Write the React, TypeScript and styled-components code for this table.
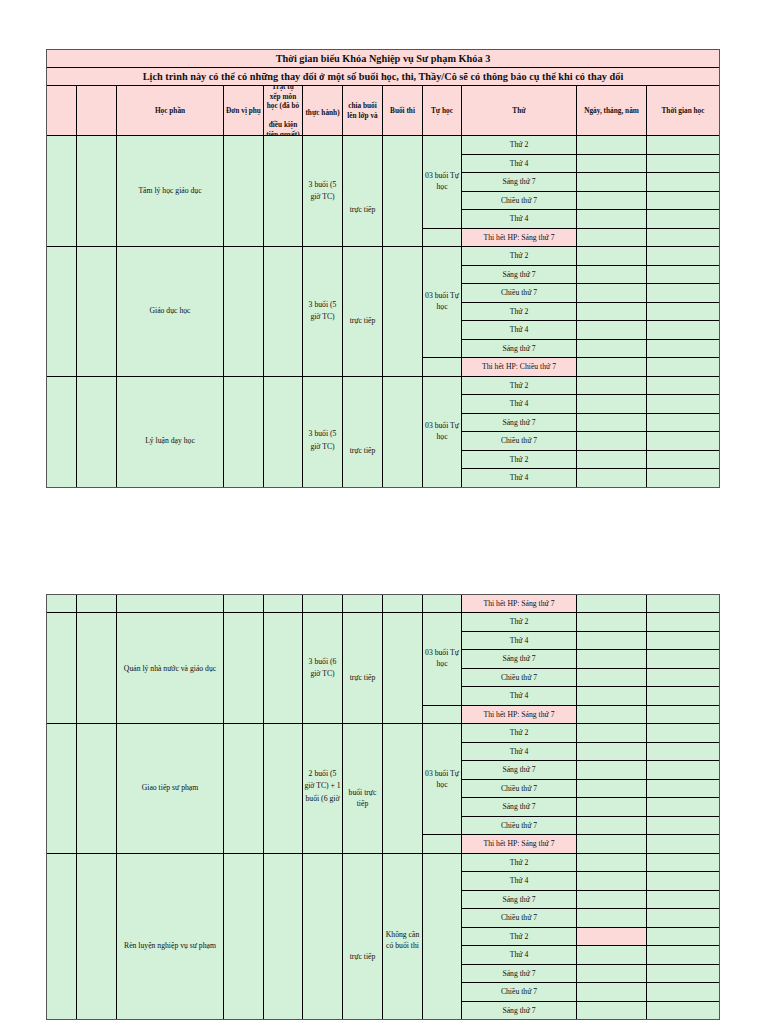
import React from 'react';
import styled, { createGlobalStyle } from 'styled-components';

const GREEN = '#d3f0d9';
const PINK = '#fcdad9';

const Global = createGlobalStyle`
  html, body { margin: 0; padding: 0; background: #fff; }
  body { font-family: "Liberation Serif", "Times New Roman", serif; color: #111; }
`;

type Section = {
  name: string;
  nameDy?: number;
  sessions?: string;
  sessionsDy?: number;
  mode: string;
  modeDy?: number;
  exam?: string;
  examDy?: number;
  selfStudy: string;
  selfDy?: number;
  selfSpan: number;
  days: string[];
  examDay?: string;
  pinkDate?: number;
};

const SELF = '03 buổi Tự\nhọc';

const firstPage: Section[] = [
  {
    name: 'Tâm lý học giáo dục', nameDy: -1,
    sessions: '3 buổi (5\ngiờ TC)',
    mode: 'trực tiếp', modeDy: 18,
    selfStudy: SELF, selfDy: -1, selfSpan: 5,
    days: ['Thứ 2', 'Thứ 4', 'Sáng thứ 7', 'Chiều thứ 7', 'Thứ 4'],
    examDay: 'Thi hết HP: Sáng thứ 7',
  },
  {
    name: 'Giáo dục học', nameDy: -1,
    sessions: '3 buổi (5\ngiờ TC)',
    mode: 'trực tiếp', modeDy: 9.5,
    selfStudy: SELF, selfDy: -1, selfSpan: 6,
    days: ['Thứ 2', 'Sáng thứ 7', 'Chiều thứ 7', 'Thứ 2', 'Thứ 4', 'Sáng thứ 7'],
    examDay: 'Thi hết HP: Chiều thứ 7',
  },
  {
    name: 'Lý luận dạy học', nameDy: 9,
    sessions: '3 buổi (5\ngiờ TC)', sessionsDy: 9,
    mode: 'trực tiếp', modeDy: 18.5,
    selfStudy: SELF, selfDy: -1, selfSpan: 6,
    days: ['Thứ 2', 'Thứ 4', 'Sáng thứ 7', 'Chiều thứ 7', 'Thứ 2', 'Thứ 4'],
  },
];

const secondPage: Section[] = [
  {
    name: 'Quản lý nhà nước và giáo dục', nameDy: 0,
    sessions: '3 buổi (6\ngiờ TC)',
    mode: 'trực tiếp', modeDy: 9.5,
    selfStudy: SELF, selfDy: -1, selfSpan: 5,
    days: ['Thứ 2', 'Thứ 4', 'Sáng thứ 7', 'Chiều thứ 7', 'Thứ 4'],
    examDay: 'Thi hết HP: Sáng thứ 7',
  },
  {
    name: 'Giao tiếp sư phạm', nameDy: -1,
    sessions: '2 buổi (5\ngiờ TC) + 1\nbuổi (6 giờ', sessionsDy: -2,
    mode: 'buổi trực\ntiếp', modeDy: 9.5,
    selfStudy: SELF, selfSpan: 6,
    days: ['Thứ 2', 'Thứ 4', 'Sáng thứ 7', 'Chiều thứ 7', 'Sáng thứ 7', 'Chiều thứ 7'],
    examDay: 'Thi hết HP: Sáng thứ 7',
  },
  {
    name: 'Rèn luyện nghiệp vụ sư phạm', nameDy: 9,
    mode: 'trực tiếp', modeDy: 20,
    exam: 'Không cần\ncó buổi thi', examDy: 3.5,
    selfStudy: '', selfSpan: 9,
    days: ['Thứ 2', 'Thứ 4', 'Sáng thứ 7', 'Chiều thứ 7', 'Thứ 2', 'Thứ 4', 'Sáng thứ 7', 'Chiều thứ 7', 'Sáng thứ 7'],
    pinkDate: 4,
  },
];

export default function App() {
  return (
    <Page>
      <Global />
      <Sheet $head>
        <Title $cols={12}>Thời gian biểu Khóa Nghiệp vụ Sư phạm Khóa 3</Title>
        <Title $cols={12}>
          Lịch trình này có thể có những thay đổi ở một số buổi học, thi, Thầy/Cô sẽ có thông báo cụ thể khi có thay đổi
        </Title>
        <Head />
        <Head />
        <Head>Học phần</Head>
        <Head>Đơn vị phụ</Head>
        <Head $lh={9.5}>{'Trật tự\nxếp môn\nhọc (đã bỏ\n\nđiều kiện\ntiên quyết)'}</Head>
        <Head $dy={2}>thực hành)</Head>
        <Head $lh={9.5}>{'chia buổi\nlên lớp và'}</Head>
        <Head>Buổi thi</Head>
        <Head>Tự học</Head>
        <Head>Thứ</Head>
        <Head>Ngày, tháng, năm</Head>
        <Head>Thời gian học</Head>
        {firstPage.map((s, i) => (
          <Block key={i} s={s} />
        ))}
      </Sheet>
      <Sheet>
        {Array.from({ length: 9 }).map((_, i) => (
          <Cell key={i} />
        ))}
        <Cell $pink>Thi hết HP: Sáng thứ 7</Cell>
        <Cell />
        <Cell />
        {secondPage.map((s, i) => (
          <Block key={i} s={s} />
        ))}
      </Sheet>
    </Page>
  );
}

function Block({ s }: { s: Section }) {
  const rows = s.days.length + (s.examDay ? 1 : 0);
  return (
    <>
      <Cell $rows={rows} />
      <Cell $rows={rows} />
      <Cell $rows={rows} $dy={s.nameDy}>{s.name}</Cell>
      <Cell $rows={rows} />
      <Cell $rows={rows} />
      <Cell $rows={rows} $dy={s.sessionsDy} $lh={12.5}>{s.sessions}</Cell>
      <Cell $rows={rows} $dy={s.modeDy}>{s.mode}</Cell>
      <Cell $rows={rows} $dy={s.examDy}>{s.exam}</Cell>
      <Cell $rows={s.selfSpan} $dy={s.selfDy}>{s.selfStudy}</Cell>
      {s.days.map((d, i) => (
        <React.Fragment key={i}>
          {i === s.selfSpan && <Cell />}
          <Cell>{d}</Cell>
          <Cell $pink={s.pinkDate === i} />
          <Cell />
        </React.Fragment>
      ))}
      {s.examDay && (
        <>
          {s.selfSpan < rows && <Cell />}
          <Cell $pink>{s.examDay}</Cell>
          <Cell />
          <Cell />
        </>
      )}
    </>
  );
}

const Page = styled.div`
  display: flex;
  flex-direction: column;
  align-items: flex-start;
  gap: 106px;
  padding: 49px 0 0 46px;
`;

const Sheet = styled.div<{ $head?: boolean }>`
  display: grid;
  grid-template-columns: 29px 39px 106px 39px 38px 39px 39px 39px 38px 114px 69px 72px;
  grid-template-rows: ${p => (p.$head ? '17px 17px 49px' : 'none')};
  grid-auto-rows: 17.5px;
  gap: 1px;
  background: #000;
  border: 1px solid #555;
`;

const Cell = styled.div<{ $pink?: boolean; $rows?: number; $cols?: number; $dy?: number; $lh?: number }>`
  grid-row: span ${p => p.$rows ?? 1};
  grid-column: span ${p => p.$cols ?? 1};
  background: ${p => (p.$pink ? PINK : GREEN)};
  display: flex;
  align-items: center;
  justify-content: center;
  text-align: center;
  overflow: hidden;
  white-space: pre;
  font-size: 7.7px;
  line-height: ${p => p.$lh ?? 11}px;
  padding-top: ${p => Math.max(0, (p.$dy ?? 0) * 2)}px;
  padding-bottom: ${p => Math.max(0, -(p.$dy ?? 0) * 2)}px;
`;

const Head = styled(Cell)`
  background: ${PINK};
  font-weight: bold;
  font-size: 7.3px;
`;

const Title = styled(Cell)`
  background: ${PINK};
  font-weight: bold;
  font-size: 10.3px;
`;
